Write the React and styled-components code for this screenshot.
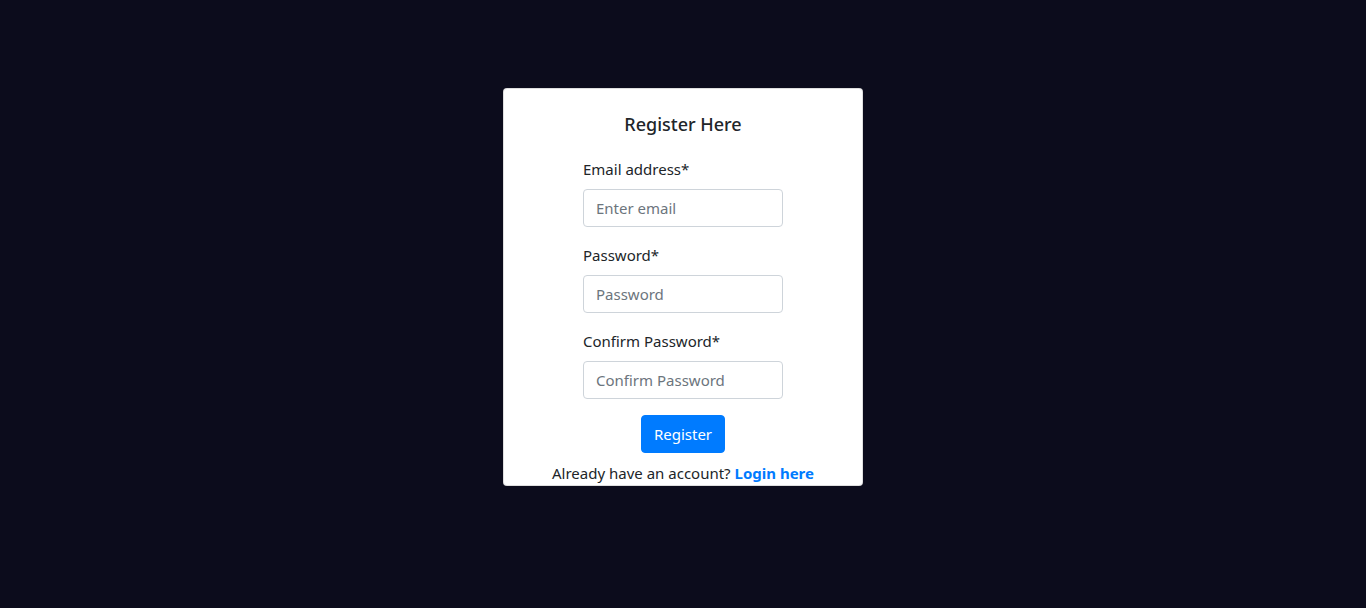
import React, { useState } from "react";
import styled, { createGlobalStyle } from "styled-components";

const GlobalStyle = createGlobalStyle`
	* { box-sizing: border-box; }
	body {
		margin: 0;
		background: #0c0c1c;
		font-family: "Noto Sans", "Segoe UI", Roboto, sans-serif;
		color: #212529;
	}
`;

export default function App(){
	const [email, setEmail] = useState("");
	const [password, setPassword] = useState("");
	const [confirm, setConfirm] = useState("");

	const fields = [
		{ id: "email", label: "Email address*", type: "email", placeholder: "Enter email", value: email, set: setEmail },
		{ id: "password", label: "Password*", type: "password", placeholder: "Password", value: password, set: setPassword },
		{ id: "confirm", label: "Confirm Password*", type: "password", placeholder: "Confirm Password", value: confirm, set: setConfirm }
	];

	return (
		<Page>
			<GlobalStyle />
			<Card>
				<Title>Register Here</Title>
				<Form onSubmit={e => e.preventDefault()}>
					{fields.map(field => (
						<Group key={field.id}>
							<Label htmlFor={field.id}>{field.label}</Label>
							<Input
								id={field.id}
								type={field.type}
								placeholder={field.placeholder}
								value={field.value}
								onChange={e => field.set(e.target.value)}
							/>
						</Group>
					))}
					<Button type="submit">Register</Button>
				</Form>
				<Footer>
					Already have an account? <LoginLink href="#">Login here</LoginLink>
				</Footer>
			</Card>
		</Page>
	);
}

const Page = styled.div`
	min-height: 100vh;
	display: flex;
	justify-content: center;
	align-items: flex-start;
	padding-top: 88px;
`;

const Card = styled.div`
	width: 360px;
	background: #ffffff;
	border: 1px solid rgba(0, 0, 0, 0.125);
	border-radius: 4px;
	display: flex;
	flex-direction: column;
	align-items: center;
	padding-top: 23px;
`;

const Title = styled.h5`
	margin: 0 0 21px;
	font-size: 18px;
	font-weight: 500;
	line-height: 24px;
`;

const Form = styled.form`
	width: 200px;
	display: flex;
	flex-direction: column;
`;

const Group = styled.div`
	display: flex;
	flex-direction: column;
	margin-bottom: 16px;
`;

const Label = styled.label`
	font-size: 15px;
	line-height: 24px;
	margin-bottom: 8px;
`;

const Input = styled.input`
	width: 200px;
	height: 38px;
	padding: 6px 12px;
	font-family: inherit;
	font-size: 15px;
	line-height: 24px;
	color: #495057;
	border: 1px solid #ced4da;
	border-radius: 4px;
	outline: none;

	&::placeholder {
		color: #6c757d;
	}
`;

const Button = styled.button`
	align-self: center;
	height: 38px;
	padding: 6px 12px;
	font-family: inherit;
	font-size: 15px;
	line-height: 24px;
	color: #ffffff;
	background: #007bff;
	border: 1px solid #007bff;
	border-radius: 4px;
	cursor: pointer;
`;

const Footer = styled.p`
	margin: 8px 0 0;
	font-size: 15px;
	line-height: 24px;
`;

const LoginLink = styled.a`
	color: #007bff;
	font-weight: 700;
	text-decoration: none;
`;
